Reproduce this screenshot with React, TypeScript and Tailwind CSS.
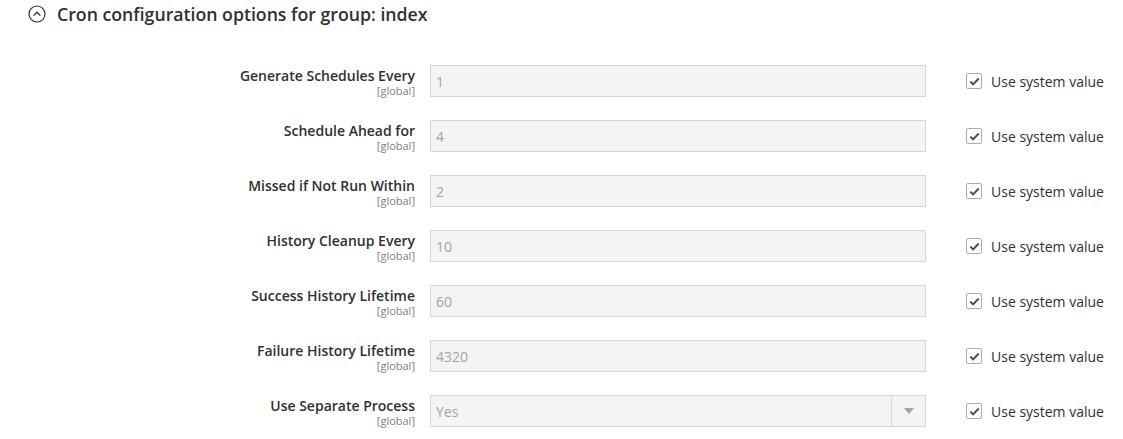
import React from 'react';

type Field = { label: string; value: string; select?: boolean };

const fields: Field[] = [
  { label: 'Generate Schedules Every', value: '1' },
  { label: 'Schedule Ahead for', value: '4' },
  { label: 'Missed if Not Run Within', value: '2' },
  { label: 'History Cleanup Every', value: '10' },
  { label: 'Success History Lifetime', value: '60' },
  { label: 'Failure History Lifetime', value: '4320' },
  { label: 'Use Separate Process', value: 'Yes', select: true },
];

const CheckBox: React.FC = () => (
  <span className="flex h-[16px] w-[16px] items-center justify-center rounded-[2px] border border-[#adadad] bg-white">
    <svg width="11" height="9" viewBox="0 0 11 9">
      <path d="M1.3 4.6 L4.1 7.3 L9.7 1.5" fill="none" stroke="#514943" strokeWidth="1.9" />
    </svg>
  </span>
);

const App: React.FC = () => {
  return (
    <div className="h-[439px] w-[1123px] overflow-hidden bg-white font-['Open_Sans',sans-serif] text-[#303030]">
      {/* section title */}
      <div className="flex h-[28px] items-center pl-[28px]">
        <svg width="18" height="18" viewBox="0 0 18 18" className="mr-[11px]">
          <circle cx="9" cy="9" r="8" fill="none" stroke="#303030" strokeWidth="1.2" />
          <path d="M5.6 10.6 L9 7.2 L12.4 10.6" fill="none" stroke="#303030" strokeWidth="1.3" />
        </svg>
        <span className="text-[17.7px] font-semibold">Cron configuration options for group: index</span>
      </div>

      <div className="pt-[37px]">
        {fields.map(f => (
          <div key={f.label} className="mb-[23px] flex h-[32px] items-start">
            <div className="w-[415px] pt-[1px] text-right">
              <div className="text-[14px] font-semibold leading-[19px]">{f.label}</div>
              <div className="text-[11px] leading-[12px] text-[#808080]">[global]</div>
            </div>
            <div className="ml-[15px] flex h-[32px] w-[496px] items-center border border-[#d6d6d6] bg-[#f4f4f4] text-[14px] text-[#a3a3a3]">
              <span className="flex-1 pl-[5px]">{f.value}</span>
              {f.select && (
                <span className="flex h-full w-[34px] items-center justify-center border-l border-[#d6d6d6]">
                  <svg width="10" height="6" viewBox="0 0 10 6">
                    <path d="M0 0 H10 L5 6 Z" fill="#a3a3a3" />
                  </svg>
                </span>
              )}
            </div>
            <label className="ml-[40px] flex h-[32px] items-center gap-[9px] text-[14px] text-[#303030]">
              <CheckBox />
              <span>Use system value</span>
            </label>
          </div>
        ))}
      </div>
    </div>
  );
};

export default App;
